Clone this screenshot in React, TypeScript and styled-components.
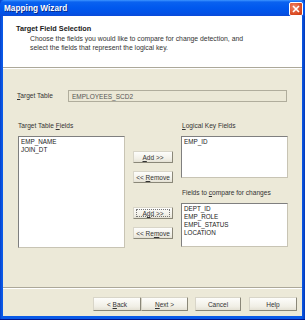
import React from "react";
import styled, { createGlobalStyle } from "styled-components";

const Global = createGlobalStyle`
  html, body { margin: 0; padding: 0; background: #fff; }
  body { font-family: "Liberation Sans", Arial, sans-serif; }
`;

const Window = styled.div`
  width: 305px;
  height: 320px;
  display: flex;
  flex-direction: column;
  background: linear-gradient(to right, #0840c8 0px, #0a5ae8 2px, #0a5ae8 302px, #0338b8 305px);
  box-sizing: border-box;
  border-bottom: 1px solid #00148c;
`;

const TitleBar = styled.div`
  height: 16px;
  flex: none;
  display: flex;
  align-items: center;
  justify-content: space-between;
  padding: 0 2px 0 4px;
  background: linear-gradient(to bottom, #3d95ff 0px, #0a62f0 2px, #0058ee 8px, #0352e6 13px, #0a4ad8 16px);
  border-radius: 5px 5px 0 0;
`;

const Title = styled.span`
  color: #fff;
  font-weight: bold;
  font-size: 8.2px;
  letter-spacing: 0.05px;
  text-shadow: 1px 1px 0 #0a2a8a;
`;

const CloseBtn = styled.div`
  width: 12px;
  height: 12px;
  margin-top: 2px;
  border: 1px solid #fff;
  border-radius: 2px;
  background: radial-gradient(circle at 35% 35%, #f0886a, #d8461e 70%, #c03a14);
  display: flex;
  align-items: center;
  justify-content: center;
`;

const Client = styled.div`
  flex: 1;
  margin: 0 3px 3px 3px;
  background: #ece9d8;
  display: flex;
  flex-direction: column;
  color: #1a1a1a;
  font-size: 6.5px;
`;

const Header = styled.div`
  height: 51px;
  flex: none;
  background: #fff;
  padding: 8px 0 0 13px;
  box-sizing: border-box;
`;

const HeaderTitle = styled.div`
  font-weight: bold;
  font-size: 7.3px;
  line-height: 9px;
`;

const HeaderText = styled.div`
  padding-left: 14px;
  margin-top: 1px;
  font-size: 6.85px;
  line-height: 9px;
  color: #333;
`;

const Separator = styled.div`
  height: 0;
  border-top: 1px solid #aca899;
  border-bottom: 1px solid #fff;
  flex: none;
`;

const Body = styled.div`
  flex: 1;
  display: flex;
  flex-direction: column;
  padding: 21px 0 0 14px;
`;

const TableRow = styled.div`
  display: flex;
  align-items: center;
  height: 12px;
`;

const Label = styled.span`
  font-size: 6.6px;
  line-height: 8px;
  color: #333;
`;

const RowLabel = styled(Label)`
  width: 51px;
`;

const TextBox = styled.div`
  width: 219px;
  height: 12px;
  box-sizing: border-box;
  border: 1px solid #b0ad9c;
  background: #ebe8d6;
  padding: 0 3px;
  display: flex;
  align-items: center;
  color: #555;
`;

const Lists = styled.div`
  display: grid;
  grid-template-columns: 107px 40px 107px;
  column-gap: 8px;
  margin-top: 20px;
  padding-left: 1px;
`;

const Column = styled.div`
  display: flex;
  flex-direction: column;
`;

const ColLabel = styled(Label)<{ $indent?: number; $mt?: number }>`
  height: 14px;
  display: block;
  padding-left: ${(p) => p.$indent ?? 0}px;
  margin-top: ${(p) => p.$mt ?? 0}px;
`;

const ListBox = styled.div<{ $h: number }>`
  height: ${(p) => p.$h}px;
  box-sizing: border-box;
  background: #fff;
  border: 1px solid #7f7f7f;
  border-right-color: #c8c4b4;
  border-bottom-color: #c8c4b4;
  padding: 1px 2px;
  font-size: 6.3px;
  line-height: 8px;
  color: #222;
`;

const ButtonCol = styled.div`
  display: flex;
  flex-direction: column;
  padding-top: 29px;
`;

const Btn = styled.div<{ $w?: number; $h?: number; $mt?: number; $focus?: boolean }>`
  width: ${(p) => p.$w ?? 40}px;
  height: ${(p) => p.$h ?? 12}px;
  margin-top: ${(p) => p.$mt ?? 0}px;
  box-sizing: border-box;
  border: 1px solid #8a8778;
  border-top-color: #d8d5c8;
  border-left-color: #d8d5c8;
  border-radius: 1px;
  background: linear-gradient(to bottom, #fdfdfb, #f1efe6 70%, #e4e1d4);
  display: flex;
  align-items: center;
  justify-content: center;
  font-size: 6.5px;
  color: #333;
  white-space: pre;
  position: relative;
  flex: none;
  ${(p) =>
    p.$focus
      ? `&::after { content: ""; position: absolute; inset: 1px 2px; border: 1px dotted #777; }`
      : ""}
`;

const U = styled.span`
  text-decoration: underline;
  text-underline-offset: 1px;
`;

const Footer = styled.div`
  flex: none;
  margin-top: auto;
`;

const FooterButtons = styled.div`
  display: flex;
  justify-content: flex-end;
  padding: 8px 5px 5px 0;
`;

const Gap = styled.div<{ $w: number }>`
  width: ${(p) => p.$w}px;
`;

export default function App() {
  return (
    <>
      <Global />
      <Window>
        <TitleBar>
          <Title>Mapping Wizard</Title>
          <CloseBtn>
            <svg width="8" height="8" viewBox="0 0 8 8">
              <path d="M1 1 L7 7 M7 1 L1 7" stroke="#fff" strokeWidth="1.6" />
            </svg>
          </CloseBtn>
        </TitleBar>
        <Client>
          <Header>
            <HeaderTitle>Target Field Selection</HeaderTitle>
            <HeaderText>
              Choose the fields you would like to compare for change detection, and
              <br />
              select the fields that represent the logical key.
            </HeaderText>
          </Header>
          <Separator />
          <Body>
            <TableRow>
              <RowLabel>
                <U>T</U>arget Table
              </RowLabel>
              <TextBox>EMPLOYEES_SCD2</TextBox>
            </TableRow>
            <Lists>
              <Column>
                <ColLabel>
                  Target Table <U>F</U>ields
                </ColLabel>
                <ListBox $h={112}>
                  EMP_NAME
                  <br />
                  JOIN_DT
                </ListBox>
              </Column>
              <ButtonCol>
                <Btn>
                  <U>A</U>{"dd >>"}
                </Btn>
                <Btn $mt={8}>
                  {"<< "}<U>R</U>emove
                </Btn>
                <Btn $mt={24} $focus>
                  A<U>d</U>{"d >>"}
                </Btn>
                <Btn $mt={8}>
                  {"<< Re"}<U>m</U>ove
                </Btn>
              </ButtonCol>
              <Column>
                <ColLabel $indent={1}>
                  <U>L</U>ogical Key Fields
                </ColLabel>
                <ListBox $h={42}>EMP_ID</ListBox>
                <ColLabel $indent={1} $mt={11}>
                  Fields to <U>c</U>ompare for changes
                </ColLabel>
                <ListBox $h={44}>
                  DEPT_ID
                  <br />
                  EMP_ROLE
                  <br />
                  EMPL_STATUS
                  <br />
                  LOCATION
                </ListBox>
              </Column>
            </Lists>
          </Body>
          <Footer>
            <Separator />
            <FooterButtons>
              <Btn $w={48} $h={14}>
                {"< "}<U>B</U>ack
              </Btn>
              <Btn $w={47} $h={14}>
                <U>N</U>{"ext >"}
              </Btn>
              <Gap $w={7} />
              <Btn $w={46} $h={14}>Cancel</Btn>
              <Gap $w={8} />
              <Btn $w={48} $h={14}>Help</Btn>
            </FooterButtons>
          </Footer>
        </Client>
      </Window>
    </>
  );
}
